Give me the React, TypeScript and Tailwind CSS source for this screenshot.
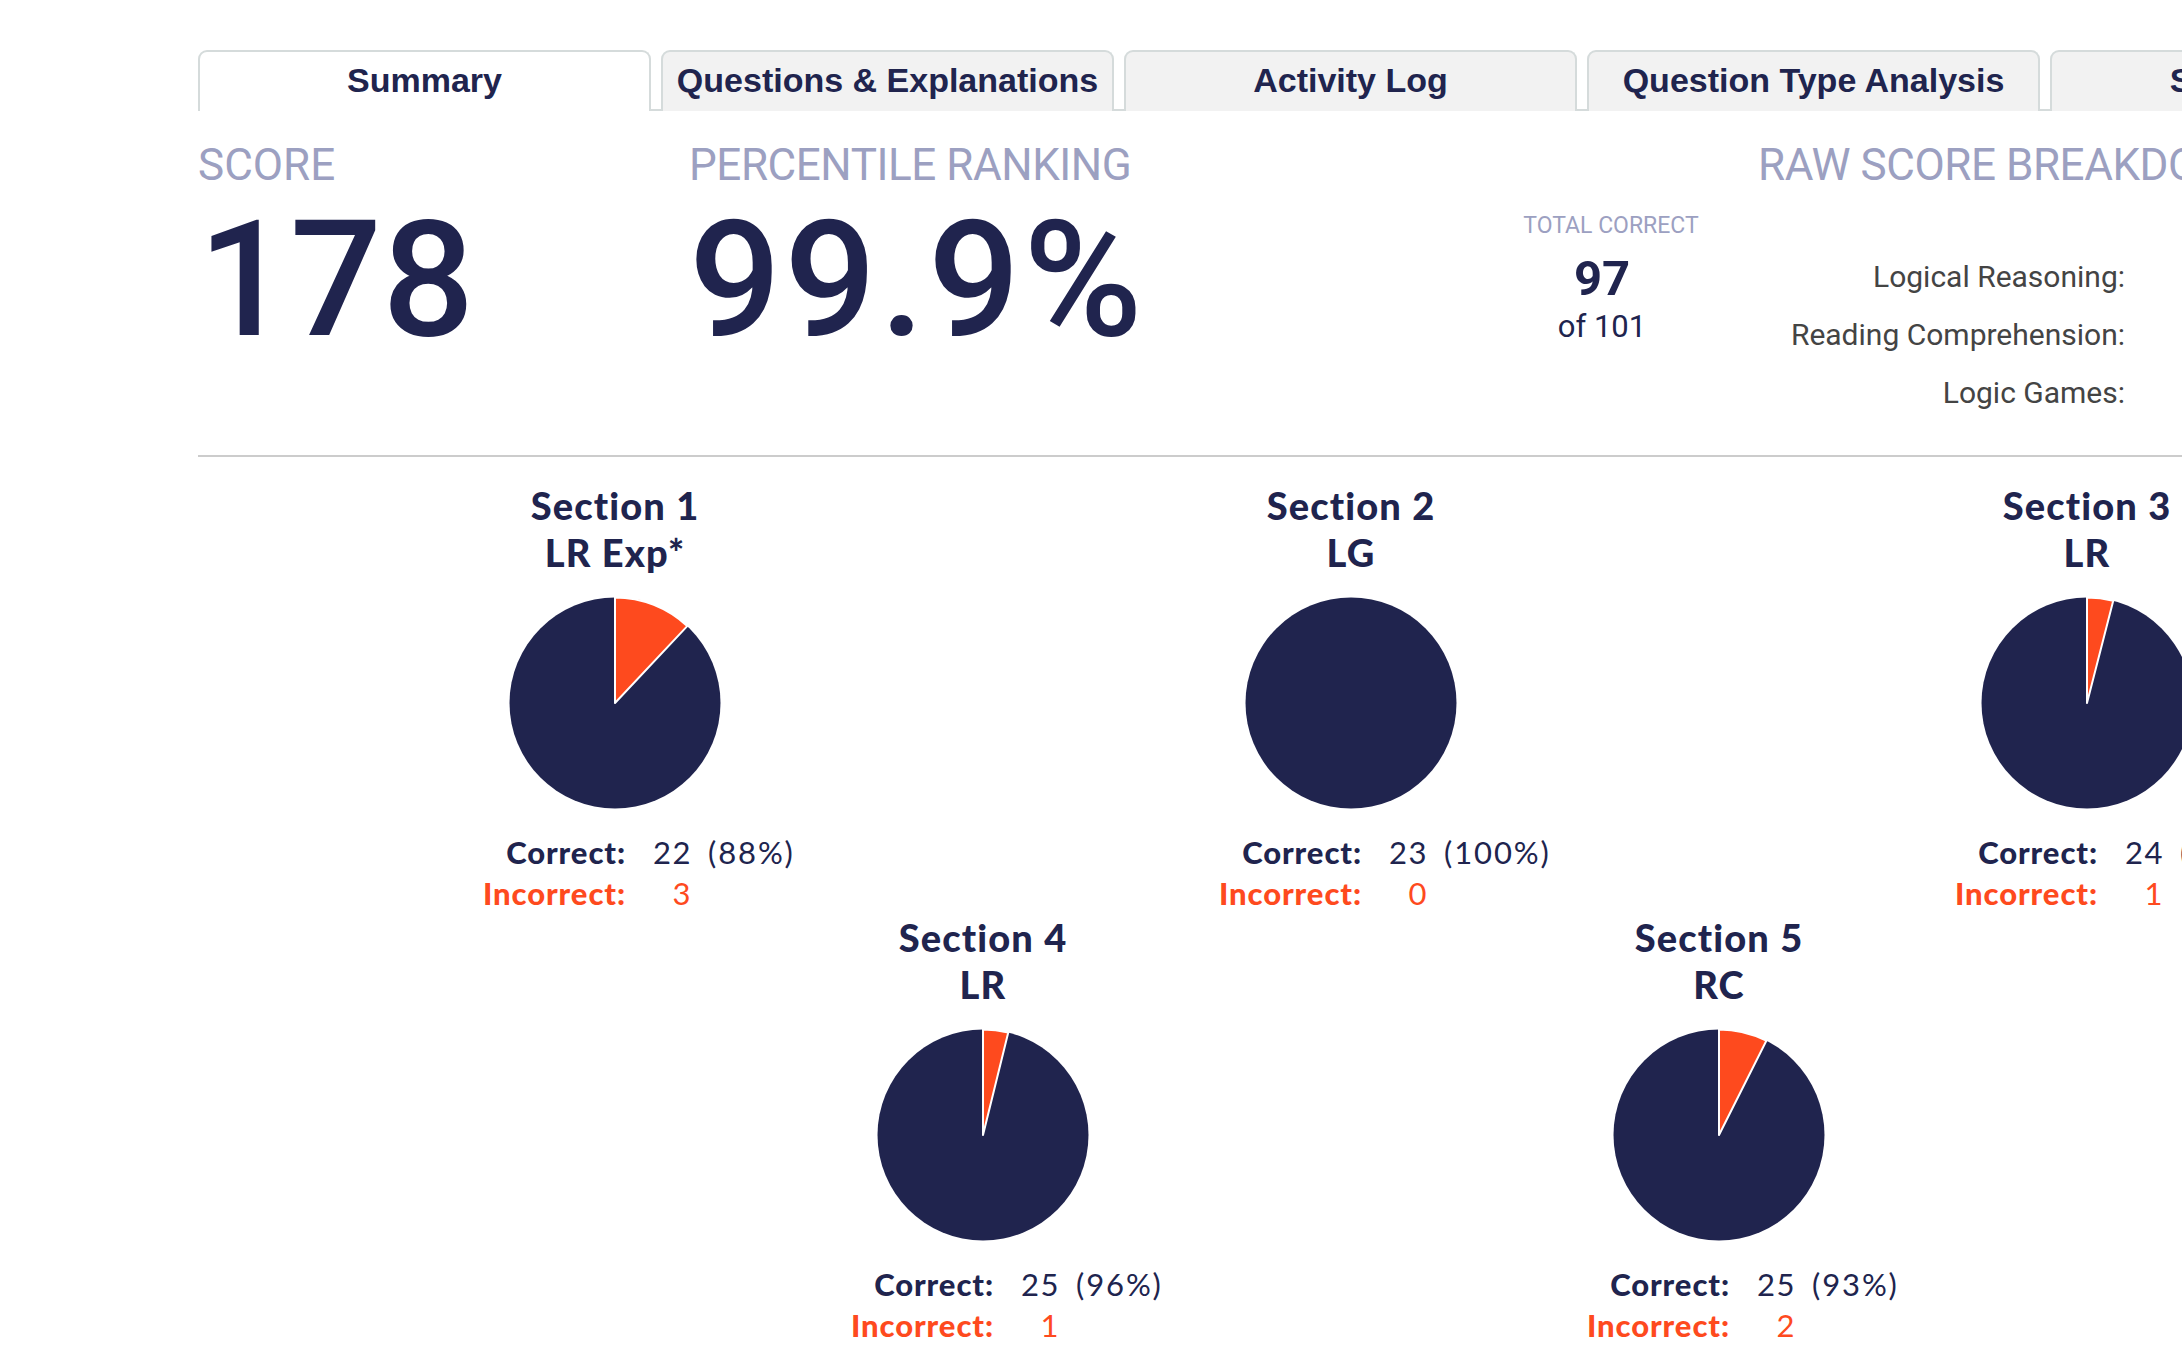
import React from "react";

type Section = {
  title: string;
  kind: string;
  correct: number;
  incorrect: number;
};

const NAVY = "#20244e";
const ORANGE = "#fe4a1e";

const ROW_ONE: Section[] = [
  { title: "Section 1", kind: "LR Exp*", correct: 22, incorrect: 3 },
  { title: "Section 2", kind: "LG", correct: 23, incorrect: 0 },
  { title: "Section 3", kind: "LR", correct: 24, incorrect: 1 },
];

const ROW_TWO: Section[] = [
  { title: "Section 4", kind: "LR", correct: 25, incorrect: 1 },
  { title: "Section 5", kind: "RC", correct: 25, incorrect: 2 },
];

const TABS = [
  "Summary",
  "Questions & Explanations",
  "Activity Log",
  "Question Type Analysis",
  "Score Report",
];

function Pie({ correct, incorrect }: { correct: number; incorrect: number }) {
  const r = 105.5;
  const c = 106;
  const total = correct + incorrect;
  const f = incorrect / total;
  const angle = f * Math.PI * 2;
  const x = c + r * Math.sin(angle);
  const y = c - r * Math.cos(angle);
  const large = f > 0.5 ? 1 : 0;

  return (
    <svg width="212" height="212" viewBox="0 0 212 212">
      <circle cx={c} cy={c} r={r} fill={NAVY} />
      {incorrect > 0 && (
        <path
          d={`M${c},${c} L${c},${c - r} A${r},${r} 0 ${large} 1 ${x},${y} Z`}
          fill={ORANGE}
          stroke="#ffffff"
          strokeWidth="2"
          strokeLinejoin="round"
        />
      )}
    </svg>
  );
}

function SectionCard({ item }: { item: Section }) {
  const pct = Math.round((item.correct / (item.correct + item.incorrect)) * 100);
  return (
    <div className="flex w-[736px] flex-col items-center font-['Lato',sans-serif]">
      <h2 className="text-center text-[38px] font-black leading-[47px] tracking-[0.03em] text-[#20244e]">
        {item.title}
        <br />
        {item.kind}
      </h2>
      <div className="mt-[21px]">
        <Pie correct={item.correct} incorrect={item.incorrect} />
      </div>
      <div className="mt-[23px] grid w-full grid-cols-[379px_auto_1fr] text-[31px] leading-[41px]">
        <div className="text-right font-black tracking-[0.03em] text-[#20244e]">Correct:</div>
        <div className="pl-[27px] text-right tracking-[0.05em] text-[#20244e]">{item.correct}</div>
        <div className="pl-[16px] tracking-[0.06em] text-[#20244e]">({pct}%)</div>
        <div className="text-right font-black tracking-[0.03em] text-[#fe4a1e]">Incorrect:</div>
        <div className="pl-[27px] text-right tracking-[0.05em] text-[#fe4a1e]">{item.incorrect}</div>
        <div />
      </div>
    </div>
  );
}

export default function App() {
  return (
    <div className="h-screen w-full overflow-hidden bg-white">
      <div className="w-[2306px] pl-[198px] pt-[50px] box-content">
        {/* tabs */}
        <div className="flex gap-[10px] border-b-2 border-[#d5dbdb]">
          {TABS.map((t, i) => (
            <div
              key={t}
              className={`-mb-[2px] flex h-[61px] w-[453px] shrink-0 items-center justify-center rounded-t-[9px] border-2 border-b-0 border-[#d5dbdb] pb-[2px] font-['Liberation_Sans',Arial,sans-serif] text-[34px] font-bold text-[#20244e] ${
                i === 0 ? "bg-white" : "bg-[#f2f2f2]"
              }`}
            >
              {t}
            </div>
          ))}
        </div>

        {/* header stats */}
        <div className="mt-[32px] flex items-start font-['Roboto',sans-serif]">
          <div className="w-[491px] shrink-0">
            <div className="text-[44px] leading-none text-[#9ca0c1]">SCORE</div>
            <div className="mt-[12px] text-[162px] font-medium leading-none text-[#20244e]">
              178
            </div>
          </div>
          <div className="w-[800px] shrink-0">
            <div className="text-[44px] leading-none tracking-[-0.01em] text-[#9ca0c1]">
              PERCENTILE RANKING
            </div>
            <div className="mt-[12px] text-[162px] font-medium leading-none tracking-[0.02em] text-[#20244e]">
              99.9%
            </div>
          </div>
          <div className="flex w-[244px] shrink-0 flex-col items-center">
            <div className="mt-[71px] text-[23px] leading-none text-[#9ca0c1]">
              TOTAL CORRECT
            </div>
            <div className="mr-[18px] mt-[17px] text-[49px] font-bold leading-none text-[#20244e]">97</div>
            <div className="mr-[18px] mt-[8px] text-[31px] leading-none text-[#20244e]">of 101</div>
          </div>
          <div className="ml-[25px] shrink-0">
            <div className="whitespace-nowrap text-[44px] leading-none tracking-[-0.01em] text-[#9ca0c1]">
              RAW SCORE BREAKDOWN
            </div>
            <div className="mt-[61px] w-[367px] text-right text-[30px] leading-[58px] text-[#444444]">
              <div>Logical Reasoning:</div>
              <div>Reading Comprehension:</div>
              <div>Logic Games:</div>
            </div>
          </div>
        </div>

        <div className="mt-[33px] h-[2px] bg-[#cccccc]" />

        {/* sections */}
        <div className="mt-[25px] flex flex-col">
          <div className="flex justify-center">
            {ROW_ONE.map((s) => (
              <SectionCard key={s.title} item={s} />
            ))}
          </div>
          <div className="flex justify-center">
            {ROW_TWO.map((s) => (
              <SectionCard key={s.title} item={s} />
            ))}
          </div>
        </div>
      </div>
    </div>
  );
}
